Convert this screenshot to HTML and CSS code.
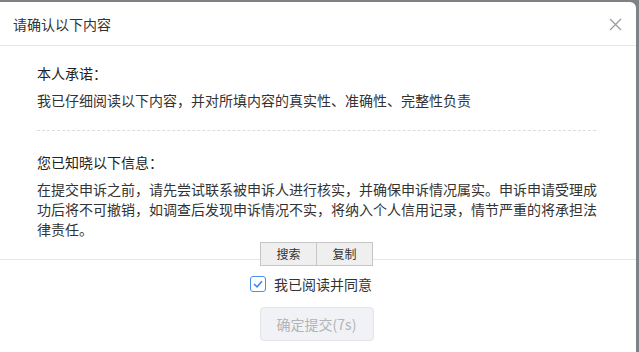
FILE: index.html
```html
<!DOCTYPE html>
<html lang="zh-CN">
<head>
	<meta charset="UTF-8">
	<title>请确认以下内容</title>
	<link rel="stylesheet" href="styles.css">
</head>
<body>
	<div class="dialog">
		<div class="dialog-header">
			<span class="dialog-title">请确认以下内容</span>
			<button class="dialog-close" aria-label="关闭">
				<svg width="13" height="13" viewBox="0 0 13 13"><path d="M1 1L12 12M12 1L1 12" stroke="#9a9a9a" stroke-width="1.2" fill="none"/></svg>
			</button>
		</div>

		<div class="dialog-body">
			<h4 class="section-title">本人承诺：</h4>
			<p class="section-text">我已仔细阅读以下内容，并对所填内容的真实性、准确性、完整性负责</p>
			<hr class="divider">
			<h4 class="section-title">您已知晓以下信息：</h4>
			<p class="section-text">在提交申诉之前，请先尝试联系被申诉人进行核实，并确保申诉情况属实。申诉申请受理成功后将不可撤销，如调查后发现申诉情况不实，将纳入个人信用记录，情节严重的将承担法律责任。</p>
		</div>

		<div class="dialog-footer">
			<label class="agree">
				<span class="agree-box">
					<svg width="10" height="8" viewBox="0 0 10 8"><path d="M1 4L4 6.8L9 1.2" stroke="#3d86f0" stroke-width="1.6" fill="none"/></svg>
				</span>
				我已阅读并同意
			</label>
			<button class="submit" disabled>确定提交(7s)</button>
		</div>

		<!-- selection popup -->
		<div class="select-toolbar">
			<span>搜索</span>
			<span>复制</span>
		</div>
	</div>
</body>
</html>
```

FILE: styles.css
```css
	/**
	 * Page
	 */
	html, body {
		margin: 0;
		height: 100%;
		overflow: hidden;
	}
	body {
		background: #7e8186;
		font: 14px/20px "Noto Sans CJK SC", "Microsoft YaHei", sans-serif;
		color: #333;
	}

	/**
	 * Dialog
	 */
	.dialog {
		position: relative;
		margin: 2px 0 0 -3px;
		width: 639px;
		height: 360px;
		background: #fff;
		border-radius: 0 6px 0 0;
	}
	.dialog-header {
		display: flex;
		align-items: center;
		justify-content: space-between;
		height: 43px;
		padding: 0 14px 0 16px;
		border-bottom: 1px solid #e6e6e6;
	}
	.dialog-title {
		font-size: 14px;
		color: #333;
	}
	.dialog-close {
		display: flex;
		padding: 0;
		margin-top: 1px;
		border: 0;
		background: none;
		cursor: pointer;
	}

	.dialog-body {
		padding: 17px 38px 20px 40px;
	}
	.section-title {
		margin: 0;
		font-weight: normal;
		color: #222;
	}
	.section-text {
		margin: 7px 0 0;
		color: #333;
	}
	.divider {
		margin: 20px 2px 21px 0;
		height: 0;
		border: 0;
		border-top: 1px dashed #dcdcdc;
	}

	/**
	 * Footer
	 */
	.dialog-footer {
		display: flex;
		flex-direction: column;
		align-items: center;
		padding-top: 14px;
		border-top: 1px solid #e6e6e6;
	}
	.agree {
		display: flex;
		align-items: center;
		gap: 8px;
		margin-right: 11px;
		color: #333;
		cursor: pointer;
	}
	.agree-box {
		display: flex;
		align-items: center;
		justify-content: center;
		width: 14px;
		height: 14px;
		border: 1px solid #4a8ff0;
		border-radius: 3px;
		background: #fff;
	}
	.submit {
		margin-top: 13px;
		width: 114px;
		height: 34px;
		padding: 0;
		border: 1px solid #e2e4e8;
		border-radius: 4px;
		background: #f1f2f5;
		color: #b2b4b8;
		font: inherit;
		cursor: not-allowed;
	}

	/**
	 * Text selection popup
	 */
	.select-toolbar {
		position: absolute;
		top: 240px; left: 263px;
		display: flex;
		border: 1px solid #c6c6c6;
		background: #efefef;
	}
	.select-toolbar span {
		width: 55px;
		height: 22px;
		font-size: 12px;
		line-height: 22px;
		text-align: center;
		color: #333;
	}
	.select-toolbar span + span {
		border-left: 1px solid #c6c6c6;
	}
```
